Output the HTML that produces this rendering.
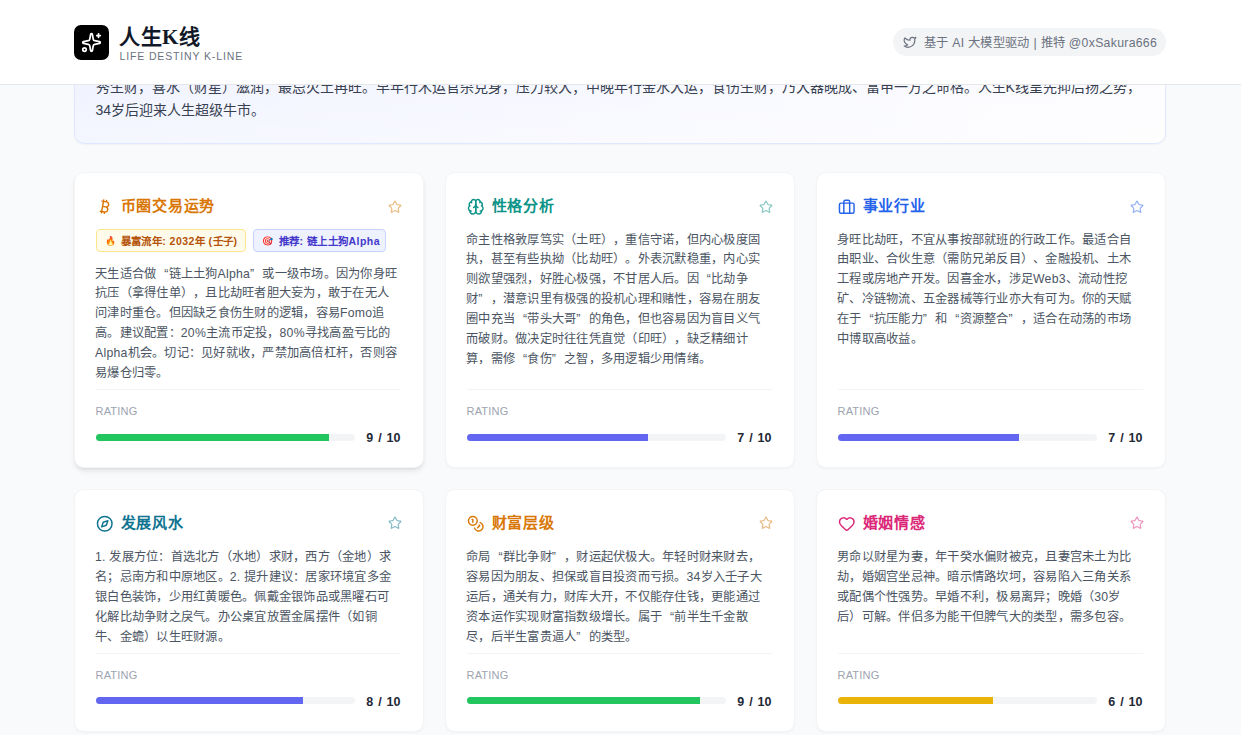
<!DOCTYPE html>
<html lang="zh-CN">
<head>
<meta charset="utf-8">
<style>
*{box-sizing:border-box;margin:0;padding:0}
html,body{width:1241px;height:735px;overflow:hidden}
body{text-spacing-trim:space-all;background:#f9fafb;font-family:"Liberation Sans",sans-serif;color:#4b5563;position:relative}
.hdr{position:absolute;left:0;top:0;width:1241px;height:85px;background:#fff;border-bottom:1px solid #e5e7eb;z-index:10}
.logo{position:absolute;left:74px;top:25px;width:35px;height:35px;background:#000;border-radius:7px}
.logo svg{position:absolute;left:7px;top:7px}
.ttl{position:absolute;left:119px;top:23.5px;font-family:"Liberation Serif",serif;font-weight:bold;font-size:21px;line-height:26px;letter-spacing:.5px;color:#111827;white-space:nowrap}
.sub{position:absolute;left:119.5px;top:49px;font-size:10.5px;line-height:14px;letter-spacing:.86px;color:#6b7280;white-space:nowrap}
.pill{position:absolute;left:893px;top:28px;width:273px;height:28px;border-radius:14px;background:#f3f4f6;color:#6b7280;font-size:12.25px;line-height:28px;letter-spacing:.3px;white-space:nowrap}
.pill svg{position:absolute;left:10px;top:7px}
.pill span{position:absolute;left:31px;top:.5px}

.sum{position:absolute;left:74px;top:-60px;width:1091.8px;height:203.5px;border:1px solid #e0e7ff;border-radius:10.5px;background:linear-gradient(180deg,rgba(255,255,255,0) 60%,rgba(255,255,255,.35) 100%),linear-gradient(90deg,#eff2ff 0%,#f6f7ff 45%,#fdfdff 100%);box-shadow:0 1px 2px rgba(0,0,0,.04)}
.sum p{position:absolute;left:20.5px;top:135.3px;font-size:14px;line-height:23px;color:#374151;white-space:nowrap}

.card{position:absolute;width:350px;background:#fff;border:1px solid #f3f4f6;border-radius:9.5px;box-shadow:0 1px 2px rgba(0,0,0,.04)}
.card.hov{box-shadow:0 4px 6px -2px rgba(0,0,0,.12),0 1.5px 3px -1.5px rgba(0,0,0,.08)}
.hd{position:absolute;left:22px;top:22px;right:21px;height:25px}
.hd .ic{position:absolute;left:-.5px;top:3px}
.hd h3{position:absolute;left:24px;top:-.7px;font-family:"Liberation Serif",serif;font-weight:bold;font-size:15px;letter-spacing:.75px;line-height:25px;white-space:nowrap}
.hd .st{position:absolute;right:0px;top:5.5px;opacity:.5}
.bd{position:absolute;top:56.8px;height:22.5px;border:1px solid;border-radius:4px;font-size:10.5px;letter-spacing:.45px;font-weight:bold;line-height:20px;white-space:nowrap}
.bd i{font-style:normal;position:absolute;left:8px;top:1px;font-size:9px}
.bd span{position:absolute;left:23.5px;top:1px}
.b2 span{left:24.5px}
.b1{left:21.5px;width:150px;background:#fffbeb;border-color:#fde68a;color:#b45309}
.b2{left:178.5px;width:133px;background:#eef2ff;border-color:#c7d2fe;color:#4338ca}
.txt{position:absolute;left:20.5px;letter-spacing:.25px;font-size:12.25px;line-height:19.906px;color:#4b5563;white-space:nowrap}
.ql,.qr{display:inline-block;width:1em}
.ql{text-align:right}.qr{text-align:left}
.rt{position:absolute;left:21px;right:22px;border-top:1px solid #f3f4f6}
.rt .lb{position:absolute;left:0;top:14px;font-size:11px;line-height:14px;color:#9ca3af;letter-spacing:.2px}
.rt .tr{position:absolute;left:0;top:43.5px;width:259px;height:7px;border-radius:3.5px;background:#f3f4f6;overflow:hidden}
.rt .tr b{display:block;height:7px}
.rt .sc{position:absolute;right:0px;top:40px;font-size:12.5px;line-height:16px;word-spacing:1.5px;font-weight:bold;color:#1f2937}
.r2 .hd{top:22.1px}
.r2 .hd .st{top:3.5px}

</style>
</head>
<body>
<div class="sum"><p>秀生财，喜水（财星）滋润，最忌火土再旺。早年行木运官杀克身，压力较大；中晚年行金水大运，食伤生财，乃大器晚成、富甲一方之命格。人生K线呈先抑后扬之势，<br>34岁后迎来人生超级牛市。</p></div>
<div class="hdr">
  <div class="logo"><svg class="" width="21" height="21" viewBox="0 0 24 24" fill="none" stroke="#fff" stroke-width="2" stroke-linecap="round" stroke-linejoin="round"><path d="M11.017 2.814a1 1 0 0 1 1.966 0l1.051 5.558a2 2 0 0 0 1.594 1.594l5.558 1.051a1 1 0 0 1 0 1.966l-5.558 1.051a2 2 0 0 0-1.594 1.594l-1.051 5.558a1 1 0 0 1-1.966 0l-1.051-5.558a2 2 0 0 0-1.594-1.594l-5.558-1.051a1 1 0 0 1 0-1.966l5.558-1.051a2 2 0 0 0 1.594-1.594z"/><path d="M20 2v4"/><path d="M22 4h-4"/><circle cx="4" cy="20" r="2"/></svg></div>
  <div class="ttl">人生K线</div>
  <div class="sub">LIFE DESTINY K-LINE</div>
  <div class="pill"><svg class="" width="14" height="14" viewBox="0 0 24 24" fill="none" stroke="#6b7280" stroke-width="2" stroke-linecap="round" stroke-linejoin="round"><path d="M22 4s-.7 2.1-2 3.4c1.6 10-9.4 17.3-18 11.6 2.2.1 4.4-.6 6-2C3 15.5.5 9.6 3 5c2.2 2.6 5.6 4.1 9 4-.9-4.2 4-6.6 7-3.8 1.1 0 3-1.2 3-1.2z"/></svg><span>基于 AI 大模型驱动 | 推特 @0xSakura666</span></div>
</div>
<div class="card hov" style="left:73.5px;top:171.5px;height:296px"><div class="hd"><svg class="ic" width="17.5" height="17.5" viewBox="0 0 24 24" fill="none" stroke="#d97706" stroke-width="2" stroke-linecap="round" stroke-linejoin="round"><path d="M11.767 19.089c4.924.868 6.14-6.025 1.216-6.894m-1.216 6.894L5.86 18.047m5.908 1.042-.347 1.97m1.563-8.864c4.924.869 6.14-6.025 1.215-6.893m-1.215 6.893-3.94-.694m5.155-6.2L8.29 4.26m5.908 1.042.348-1.97M7.48 20.364l3.126-17.727"/></svg><h3 style="color:#d97706">币圈交易运势</h3><svg class="st" width="14" height="14" viewBox="0 0 24 24" fill="none" stroke="#d97706" stroke-width="2" stroke-linecap="round" stroke-linejoin="round"><path d="M11.525 2.295a.53.53 0 0 1 .95 0l2.31 4.679a2.123 2.123 0 0 0 1.595 1.16l5.166.756a.53.53 0 0 1 .294.904l-3.736 3.638a2.123 2.123 0 0 0-.611 1.878l.882 5.14a.53.53 0 0 1-.771.56l-4.618-2.428a2.122 2.122 0 0 0-1.973 0L6.396 21.01a.53.53 0 0 1-.77-.56l.881-5.139a2.122 2.122 0 0 0-.611-1.879L2.16 9.795a.53.53 0 0 1 .294-.906l5.165-.755a2.122 2.122 0 0 0 1.597-1.16z"/></svg></div><div class="bd b1"><i>🔥</i><span>暴富流年: 2032年 (壬子)</span></div><div class="bd b2"><i>🎯</i><span>推荐: 链上土狗Alpha</span></div><div class="txt" style="top:92px">天生适合做<span class="ql">“</span>链上土狗Alpha<span class="qr">”</span>或一级市场。因为你身旺<br>抗压（拿得住单），且比劫旺者胆大妄为，敢于在无人<br>问津时重仓。但因缺乏食伤生财的逻辑，容易Fomo追<br>高。建议配置：20%主流币定投，80%寻找高盈亏比的<br>Alpha机会。切记：见好就收，严禁加高倍杠杆，否则容<br>易爆仓归零。</div><div class="rt" style="top:216.5px"><div class="lb">RATING</div><div class="tr"><b style="width:90%;background:#22c55e"></b></div><div class="sc">9 / 10</div></div></div>
<div class="card" style="left:444.5px;top:171.5px;height:296px"><div class="hd"><svg class="ic" width="17.5" height="17.5" viewBox="0 0 24 24" fill="none" stroke="#0d9488" stroke-width="2" stroke-linecap="round" stroke-linejoin="round"><path d="M12 5a3 3 0 1 0-5.997.125 4 4 0 0 0-2.526 5.77 4 4 0 0 0 .556 6.588A4 4 0 1 0 12 18Z"/><path d="M12 5a3 3 0 1 1 5.997.125 4 4 0 0 1 2.526 5.77 4 4 0 0 1-.556 6.588A4 4 0 1 1 12 18Z"/><path d="M15 13a4.5 4.5 0 0 1-3-4 4.5 4.5 0 0 1-3 4"/><path d="M17.599 6.5a3 3 0 0 0 .399-1.375"/><path d="M6.003 5.125A3 3 0 0 0 6.401 6.5"/><path d="M3.477 10.896a4 4 0 0 1 .585-.396"/><path d="M19.938 10.5a4 4 0 0 1 .585.396"/><path d="M6 18a4 4 0 0 1-1.967-.516"/><path d="M19.967 17.484A4 4 0 0 1 18 18"/></svg><h3 style="color:#0d9488">性格分析</h3><svg class="st" width="14" height="14" viewBox="0 0 24 24" fill="none" stroke="#0d9488" stroke-width="2" stroke-linecap="round" stroke-linejoin="round"><path d="M11.525 2.295a.53.53 0 0 1 .95 0l2.31 4.679a2.123 2.123 0 0 0 1.595 1.16l5.166.756a.53.53 0 0 1 .294.904l-3.736 3.638a2.123 2.123 0 0 0-.611 1.878l.882 5.14a.53.53 0 0 1-.771.56l-4.618-2.428a2.122 2.122 0 0 0-1.973 0L6.396 21.01a.53.53 0 0 1-.77-.56l.881-5.139a2.122 2.122 0 0 0-.611-1.879L2.16 9.795a.53.53 0 0 1 .294-.906l5.165-.755a2.122 2.122 0 0 0 1.597-1.16z"/></svg></div><div class="txt" style="top:58px">命主性格敦厚笃实（土旺），重信守诺，但内心极度固<br>执，甚至有些执拗（比劫旺）。外表沉默稳重，内心实<br>则欲望强烈，好胜心极强，不甘居人后。因<span class="ql">“</span>比劫争<br>财<span class="qr">”</span>，潜意识里有极强的投机心理和赌性，容易在朋友<br>圈中充当<span class="ql">“</span>带头大哥<span class="qr">”</span>的角色，但也容易因为盲目义气<br>而破财。做决定时往往凭直觉（印旺），缺乏精细计<br>算，需修<span class="ql">“</span>食伤<span class="qr">”</span>之智，多用逻辑少用情绪。</div><div class="rt" style="top:216.5px"><div class="lb">RATING</div><div class="tr"><b style="width:70%;background:#6366f1"></b></div><div class="sc">7 / 10</div></div></div>
<div class="card" style="left:815.5px;top:171.5px;height:296px"><div class="hd"><svg class="ic" width="17.5" height="17.5" viewBox="0 0 24 24" fill="none" stroke="#2563eb" stroke-width="2" stroke-linecap="round" stroke-linejoin="round"><rect width="20" height="14" x="2" y="7" rx="2" ry="2"/><path d="M16 21V5a2 2 0 0 0-2-2h-4a2 2 0 0 0-2 2v16"/></svg><h3 style="color:#2563eb">事业行业</h3><svg class="st" width="14" height="14" viewBox="0 0 24 24" fill="none" stroke="#2563eb" stroke-width="2" stroke-linecap="round" stroke-linejoin="round"><path d="M11.525 2.295a.53.53 0 0 1 .95 0l2.31 4.679a2.123 2.123 0 0 0 1.595 1.16l5.166.756a.53.53 0 0 1 .294.904l-3.736 3.638a2.123 2.123 0 0 0-.611 1.878l.882 5.14a.53.53 0 0 1-.771.56l-4.618-2.428a2.122 2.122 0 0 0-1.973 0L6.396 21.01a.53.53 0 0 1-.77-.56l.881-5.139a2.122 2.122 0 0 0-.611-1.879L2.16 9.795a.53.53 0 0 1 .294-.906l5.165-.755a2.122 2.122 0 0 0 1.597-1.16z"/></svg></div><div class="txt" style="top:58px">身旺比劫旺，不宜从事按部就班的行政工作。最适合自<br>由职业、合伙生意（需防兄弟反目）、金融投机、土木<br>工程或房地产开发。因喜金水，涉足Web3、流动性挖<br>矿、冷链物流、五金器械等行业亦大有可为。你的天赋<br>在于<span class="ql">“</span>抗压能力<span class="qr">”</span>和<span class="ql">“</span>资源整合<span class="qr">”</span>，适合在动荡的市场<br>中博取高收益。</div><div class="rt" style="top:216.5px"><div class="lb">RATING</div><div class="tr"><b style="width:70%;background:#6366f1"></b></div><div class="sc">7 / 10</div></div></div>
<div class="card r2" style="left:73.5px;top:489px;height:243px"><div class="hd"><svg class="ic" width="17.5" height="17.5" viewBox="0 0 24 24" fill="none" stroke="#0e7490" stroke-width="2" stroke-linecap="round" stroke-linejoin="round"><circle cx="12" cy="12" r="10"/><polygon points="16.24 7.76 14.12 14.12 7.76 16.24 9.88 9.88 16.24 7.76"/></svg><h3 style="color:#0e7490">发展风水</h3><svg class="st" width="14" height="14" viewBox="0 0 24 24" fill="none" stroke="#0e7490" stroke-width="2" stroke-linecap="round" stroke-linejoin="round"><path d="M11.525 2.295a.53.53 0 0 1 .95 0l2.31 4.679a2.123 2.123 0 0 0 1.595 1.16l5.166.756a.53.53 0 0 1 .294.904l-3.736 3.638a2.123 2.123 0 0 0-.611 1.878l.882 5.14a.53.53 0 0 1-.771.56l-4.618-2.428a2.122 2.122 0 0 0-1.973 0L6.396 21.01a.53.53 0 0 1-.77-.56l.881-5.139a2.122 2.122 0 0 0-.611-1.879L2.16 9.795a.53.53 0 0 1 .294-.906l5.165-.755a2.122 2.122 0 0 0 1.597-1.16z"/></svg></div><div class="txt" style="top:58.2px">1. 发展方位：首选北方（水地）求财，西方（金地）求<br>名；忌南方和中原地区。2. 提升建议：居家环境宜多金<br>银白色装饰，少用红黄暖色。佩戴金银饰品或黑曜石可<br>化解比劫争财之戾气。办公桌宜放置金属摆件（如铜<br>牛、金蟾）以生旺财源。</div><div class="rt" style="top:162.8px"><div class="lb">RATING</div><div class="tr"><b style="width:80%;background:#6366f1"></b></div><div class="sc">8 / 10</div></div></div>
<div class="card r2" style="left:444.5px;top:489px;height:243px"><div class="hd"><svg class="ic" width="17.5" height="17.5" viewBox="0 0 24 24" fill="none" stroke="#d97706" stroke-width="2" stroke-linecap="round" stroke-linejoin="round"><circle cx="8" cy="8" r="6"/><path d="M18.09 10.37A6 6 0 1 1 10.34 18"/><path d="M7 6h1v4"/><path d="m16.71 13.88.7.71-2.82 2.82"/></svg><h3 style="color:#d97706">财富层级</h3><svg class="st" width="14" height="14" viewBox="0 0 24 24" fill="none" stroke="#d97706" stroke-width="2" stroke-linecap="round" stroke-linejoin="round"><path d="M11.525 2.295a.53.53 0 0 1 .95 0l2.31 4.679a2.123 2.123 0 0 0 1.595 1.16l5.166.756a.53.53 0 0 1 .294.904l-3.736 3.638a2.123 2.123 0 0 0-.611 1.878l.882 5.14a.53.53 0 0 1-.771.56l-4.618-2.428a2.122 2.122 0 0 0-1.973 0L6.396 21.01a.53.53 0 0 1-.77-.56l.881-5.139a2.122 2.122 0 0 0-.611-1.879L2.16 9.795a.53.53 0 0 1 .294-.906l5.165-.755a2.122 2.122 0 0 0 1.597-1.16z"/></svg></div><div class="txt" style="top:58.2px">命局<span class="ql">“</span>群比争财<span class="qr">”</span>，财运起伏极大。年轻时财来财去，<br>容易因为朋友、担保或盲目投资而亏损。34岁入壬子大<br>运后，通关有力，财库大开，不仅能存住钱，更能通过<br>资本运作实现财富指数级增长。属于<span class="ql">“</span>前半生千金散<br>尽，后半生富贵逼人<span class="qr">”</span>的类型。</div><div class="rt" style="top:162.8px"><div class="lb">RATING</div><div class="tr"><b style="width:90%;background:#22c55e"></b></div><div class="sc">9 / 10</div></div></div>
<div class="card r2" style="left:815.5px;top:489px;height:243px"><div class="hd"><svg class="ic" width="17.5" height="17.5" viewBox="0 0 24 24" fill="none" stroke="#db2777" stroke-width="2" stroke-linecap="round" stroke-linejoin="round"><path d="M2 9.5a5.5 5.5 0 0 1 9.591-3.676.56.56 0 0 0 .818 0A5.5 5.5 0 0 1 22 9.5c0 2.29-1.5 4-3 5.5l-5.492 5.313a2 2 0 0 1-3 .019L5 15c-1.5-1.5-3-3.2-3-5.5"/></svg><h3 style="color:#db2777">婚姻情感</h3><svg class="st" width="14" height="14" viewBox="0 0 24 24" fill="none" stroke="#db2777" stroke-width="2" stroke-linecap="round" stroke-linejoin="round"><path d="M11.525 2.295a.53.53 0 0 1 .95 0l2.31 4.679a2.123 2.123 0 0 0 1.595 1.16l5.166.756a.53.53 0 0 1 .294.904l-3.736 3.638a2.123 2.123 0 0 0-.611 1.878l.882 5.14a.53.53 0 0 1-.771.56l-4.618-2.428a2.122 2.122 0 0 0-1.973 0L6.396 21.01a.53.53 0 0 1-.77-.56l.881-5.139a2.122 2.122 0 0 0-.611-1.879L2.16 9.795a.53.53 0 0 1 .294-.906l5.165-.755a2.122 2.122 0 0 0 1.597-1.16z"/></svg></div><div class="txt" style="top:58.2px">男命以财星为妻，年干癸水偏财被克，且妻宫未土为比<br>劫，婚姻宫坐忌神。暗示情路坎坷，容易陷入三角关系<br>或配偶个性强势。早婚不利，极易离异；晚婚（30岁<br>后）可解。伴侣多为能干但脾气大的类型，需多包容。</div><div class="rt" style="top:162.8px"><div class="lb">RATING</div><div class="tr"><b style="width:60%;background:#eab308"></b></div><div class="sc">6 / 10</div></div></div>
</body>
</html>
